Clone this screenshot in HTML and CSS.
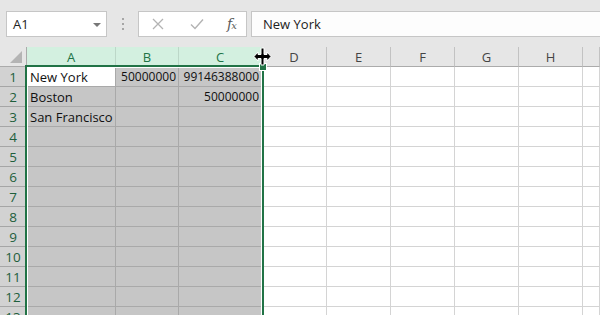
FILE: index.html
```html
<!DOCTYPE html>
<html>
<head>
<meta charset="utf-8">
<link rel="stylesheet" href="styles.css">
</head>
<body>
<div class="app">
  <div class="toolbar">
    <div class="namebox"><span class="nb-text">A1</span><span class="nb-arrow"></span></div>
    <div class="grip"><i></i><i></i><i></i></div>
    <div class="fxbtns">
      <svg class="ico-x" width="12" height="12" viewBox="0 0 12 12"><path d="M1 1 L11 11 M11 1 L1 11" stroke="#b3b3b3" stroke-width="1.3" fill="none"/></svg>
      <svg class="ico-ok" width="14" height="12" viewBox="0 0 14 12"><path d="M1 6.5 L5 10.5 L13 1.5" stroke="#b3b3b3" stroke-width="1.4" fill="none"/></svg>
      <span class="ico-fx">f<span class="fx-x">x</span></span>
    </div>
    <div class="formula">New York</div>
  </div>
  <div class="sheet">
    <div class="row head">
      <div class="corner"><span class="tri"></span></div>
      <div class="ch sel">A</div><div class="ch sel">B</div><div class="ch sel">C</div>
      <div class="ch">D</div><div class="ch">E</div><div class="ch">F</div><div class="ch">G</div><div class="ch">H</div><div class="ch last"></div>
    </div>
    <div class="row"><div class="rh">1</div><div class="c s act">New York</div><div class="c s num">50000000</div><div class="c s num">99146388000</div><div class="c"></div><div class="c"></div><div class="c"></div><div class="c"></div><div class="c"></div><div class="c"></div></div>
    <div class="row"><div class="rh">2</div><div class="c s">Boston</div><div class="c s"></div><div class="c s num">50000000</div><div class="c"></div><div class="c"></div><div class="c"></div><div class="c"></div><div class="c"></div><div class="c"></div></div>
    <div class="row"><div class="rh">3</div><div class="c s">San Francisco</div><div class="c s"></div><div class="c s"></div><div class="c"></div><div class="c"></div><div class="c"></div><div class="c"></div><div class="c"></div><div class="c"></div></div>
    <div class="row"><div class="rh">4</div><div class="c s"></div><div class="c s"></div><div class="c s"></div><div class="c"></div><div class="c"></div><div class="c"></div><div class="c"></div><div class="c"></div><div class="c"></div></div>
    <div class="row"><div class="rh">5</div><div class="c s"></div><div class="c s"></div><div class="c s"></div><div class="c"></div><div class="c"></div><div class="c"></div><div class="c"></div><div class="c"></div><div class="c"></div></div>
    <div class="row"><div class="rh">6</div><div class="c s"></div><div class="c s"></div><div class="c s"></div><div class="c"></div><div class="c"></div><div class="c"></div><div class="c"></div><div class="c"></div><div class="c"></div></div>
    <div class="row"><div class="rh">7</div><div class="c s"></div><div class="c s"></div><div class="c s"></div><div class="c"></div><div class="c"></div><div class="c"></div><div class="c"></div><div class="c"></div><div class="c"></div></div>
    <div class="row"><div class="rh">8</div><div class="c s"></div><div class="c s"></div><div class="c s"></div><div class="c"></div><div class="c"></div><div class="c"></div><div class="c"></div><div class="c"></div><div class="c"></div></div>
    <div class="row"><div class="rh">9</div><div class="c s"></div><div class="c s"></div><div class="c s"></div><div class="c"></div><div class="c"></div><div class="c"></div><div class="c"></div><div class="c"></div><div class="c"></div></div>
    <div class="row"><div class="rh">10</div><div class="c s"></div><div class="c s"></div><div class="c s"></div><div class="c"></div><div class="c"></div><div class="c"></div><div class="c"></div><div class="c"></div><div class="c"></div></div>
    <div class="row"><div class="rh">11</div><div class="c s"></div><div class="c s"></div><div class="c s"></div><div class="c"></div><div class="c"></div><div class="c"></div><div class="c"></div><div class="c"></div><div class="c"></div></div>
    <div class="row"><div class="rh">12</div><div class="c s"></div><div class="c s"></div><div class="c s"></div><div class="c"></div><div class="c"></div><div class="c"></div><div class="c"></div><div class="c"></div><div class="c"></div></div>
    <div class="row"><div class="rh">13</div><div class="c s"></div><div class="c s"></div><div class="c s"></div><div class="c"></div><div class="c"></div><div class="c"></div><div class="c"></div><div class="c"></div><div class="c"></div></div>

    <div class="selection"><span class="handle"></span></div>
    <svg class="cursor" width="19" height="19" viewBox="0 0 19 19">
      <path d="M8 1 H11 V7.5 H14 V5 L18 9.5 L14 14 V11.5 H11 V18 H8 V11.5 H5 V14 L1 9.5 L5 5 V7.5 H8 Z" fill="#000" stroke="#fff" stroke-width="1"/>
    </svg>
  </div>
</div>
</body>
</html>
```
FILE: styles.css
```css
* { box-sizing: border-box; }
html, body { margin: 0; padding: 0; }
body {
  width: 600px;
  height: 315px;
  overflow: hidden;
  background: #e6e6e6;
  font-family: "Open Sans", "Noto Sans", sans-serif;
  color: #000;
}
.app { width: 600px; height: 315px; overflow: hidden; }

.toolbar {
  height: 47px;
  display: flex;
  align-items: flex-start;
  padding: 11px 0 0 6px;
  background: #e6e6e6;
}
.namebox {
  width: 101px;
  height: 26px;
  background: #fff;
  border: 1px solid #c6c6c6;
  display: flex;
  align-items: center;
  justify-content: space-between;
  padding: 0 5px 0 6px;
  font-size: 13px;
  color: #222;
}
.nb-arrow {
  width: 0; height: 0;
  border-left: 4px solid transparent;
  border-right: 4px solid transparent;
  border-top: 4px solid #777;
  margin-top: 1px;
}
.grip {
  width: 2px;
  margin: 7px 14px 0 15px;
  display: flex;
  flex-direction: column;
  gap: 3px;
}
.grip i { display: block; width: 2px; height: 2px; background: #a6a6a6; }
.fxbtns {
  width: 109px;
  height: 26px;
  background: #fff;
  border: 1px solid #c6c6c6;
  display: flex;
  align-items: center;
  padding-left: 13px;
}
.ico-x { margin-right: 26px; }
.ico-ok { margin-right: 23px; }
.ico-fx {
  font-family: "DejaVu Serif", "Liberation Serif", serif;
  font-style: italic;
  font-size: 14px;
  color: #5a5a5a;
  letter-spacing: -1px;
}
.fx-x { font-size: 10px; }
.formula {
  flex: 1;
  height: 26px;
  margin-left: 4px;
  background: #fdfdfd;
  border: 1px solid #c6c6c6;
  border-right: none;
  padding-left: 11px;
  font-size: 13px;
  line-height: 24px;
  color: #222;
}

.sheet { position: relative; background: #fff; }
.row {
  display: grid;
  grid-template-columns: 27px 89px 63px 83px 65px 64px 64px 64px 64px 1fr;
  height: 20px;
}
.row > div {
  border-right: 1px solid #d4d4d4;
  border-bottom: 1px solid #d4d4d4;
  font-size: 13px;
  line-height: 20px;
  white-space: nowrap;
  overflow: hidden;
}
.head > div {
  background: #e6e6e6;
  border-bottom: 1px solid #ababab;
  border-right: 1px solid #c2c2c2;
  text-align: center;
  color: #444;
  font-size: 13px;
  line-height: 20px;
}
.head > .sel {
  background: #d3f0e0;
  color: #217346;
  border-right-color: #bcd7c8;
}
.head > .corner { position: relative; border-right-color: #ababab; }
.tri {
  position: absolute;
  right: 4px;
  bottom: 3px;
  width: 0; height: 0;
  border-left: 12px solid transparent;
  border-bottom: 12px solid #b4b4b4;
}
.row > .rh {
  background: #d2d2d2;
  color: #1e5f3c;
  text-align: center;
  font-size: 13.5px;
  border-right: 1px solid #ababab;
  border-bottom: 1px solid #a6a6a6;
}
.row > .c { padding: 0 3px; color: #111; }
.row > .s { background: #c6c6c6; border-color: #a9a9a9; }
.row > .act { background: #fff; }
.row > .num { text-align: right; font-size: 12px; padding-right: 2px; }

.selection {
  position: absolute;
  left: 25px;
  top: 18px;
  width: 239px;
  height: 320px;
  border: 2px solid #217346;
  box-shadow: inset 0 0 0 1px #fff;
}
.handle {
  position: absolute;
  right: -4px;
  top: -3px;
  width: 6px;
  height: 6px;
  background: #217346;
  outline: 1px solid #fff;
}
.cursor {
  position: absolute;
  left: 253px;
  top: 0px;
}
```
